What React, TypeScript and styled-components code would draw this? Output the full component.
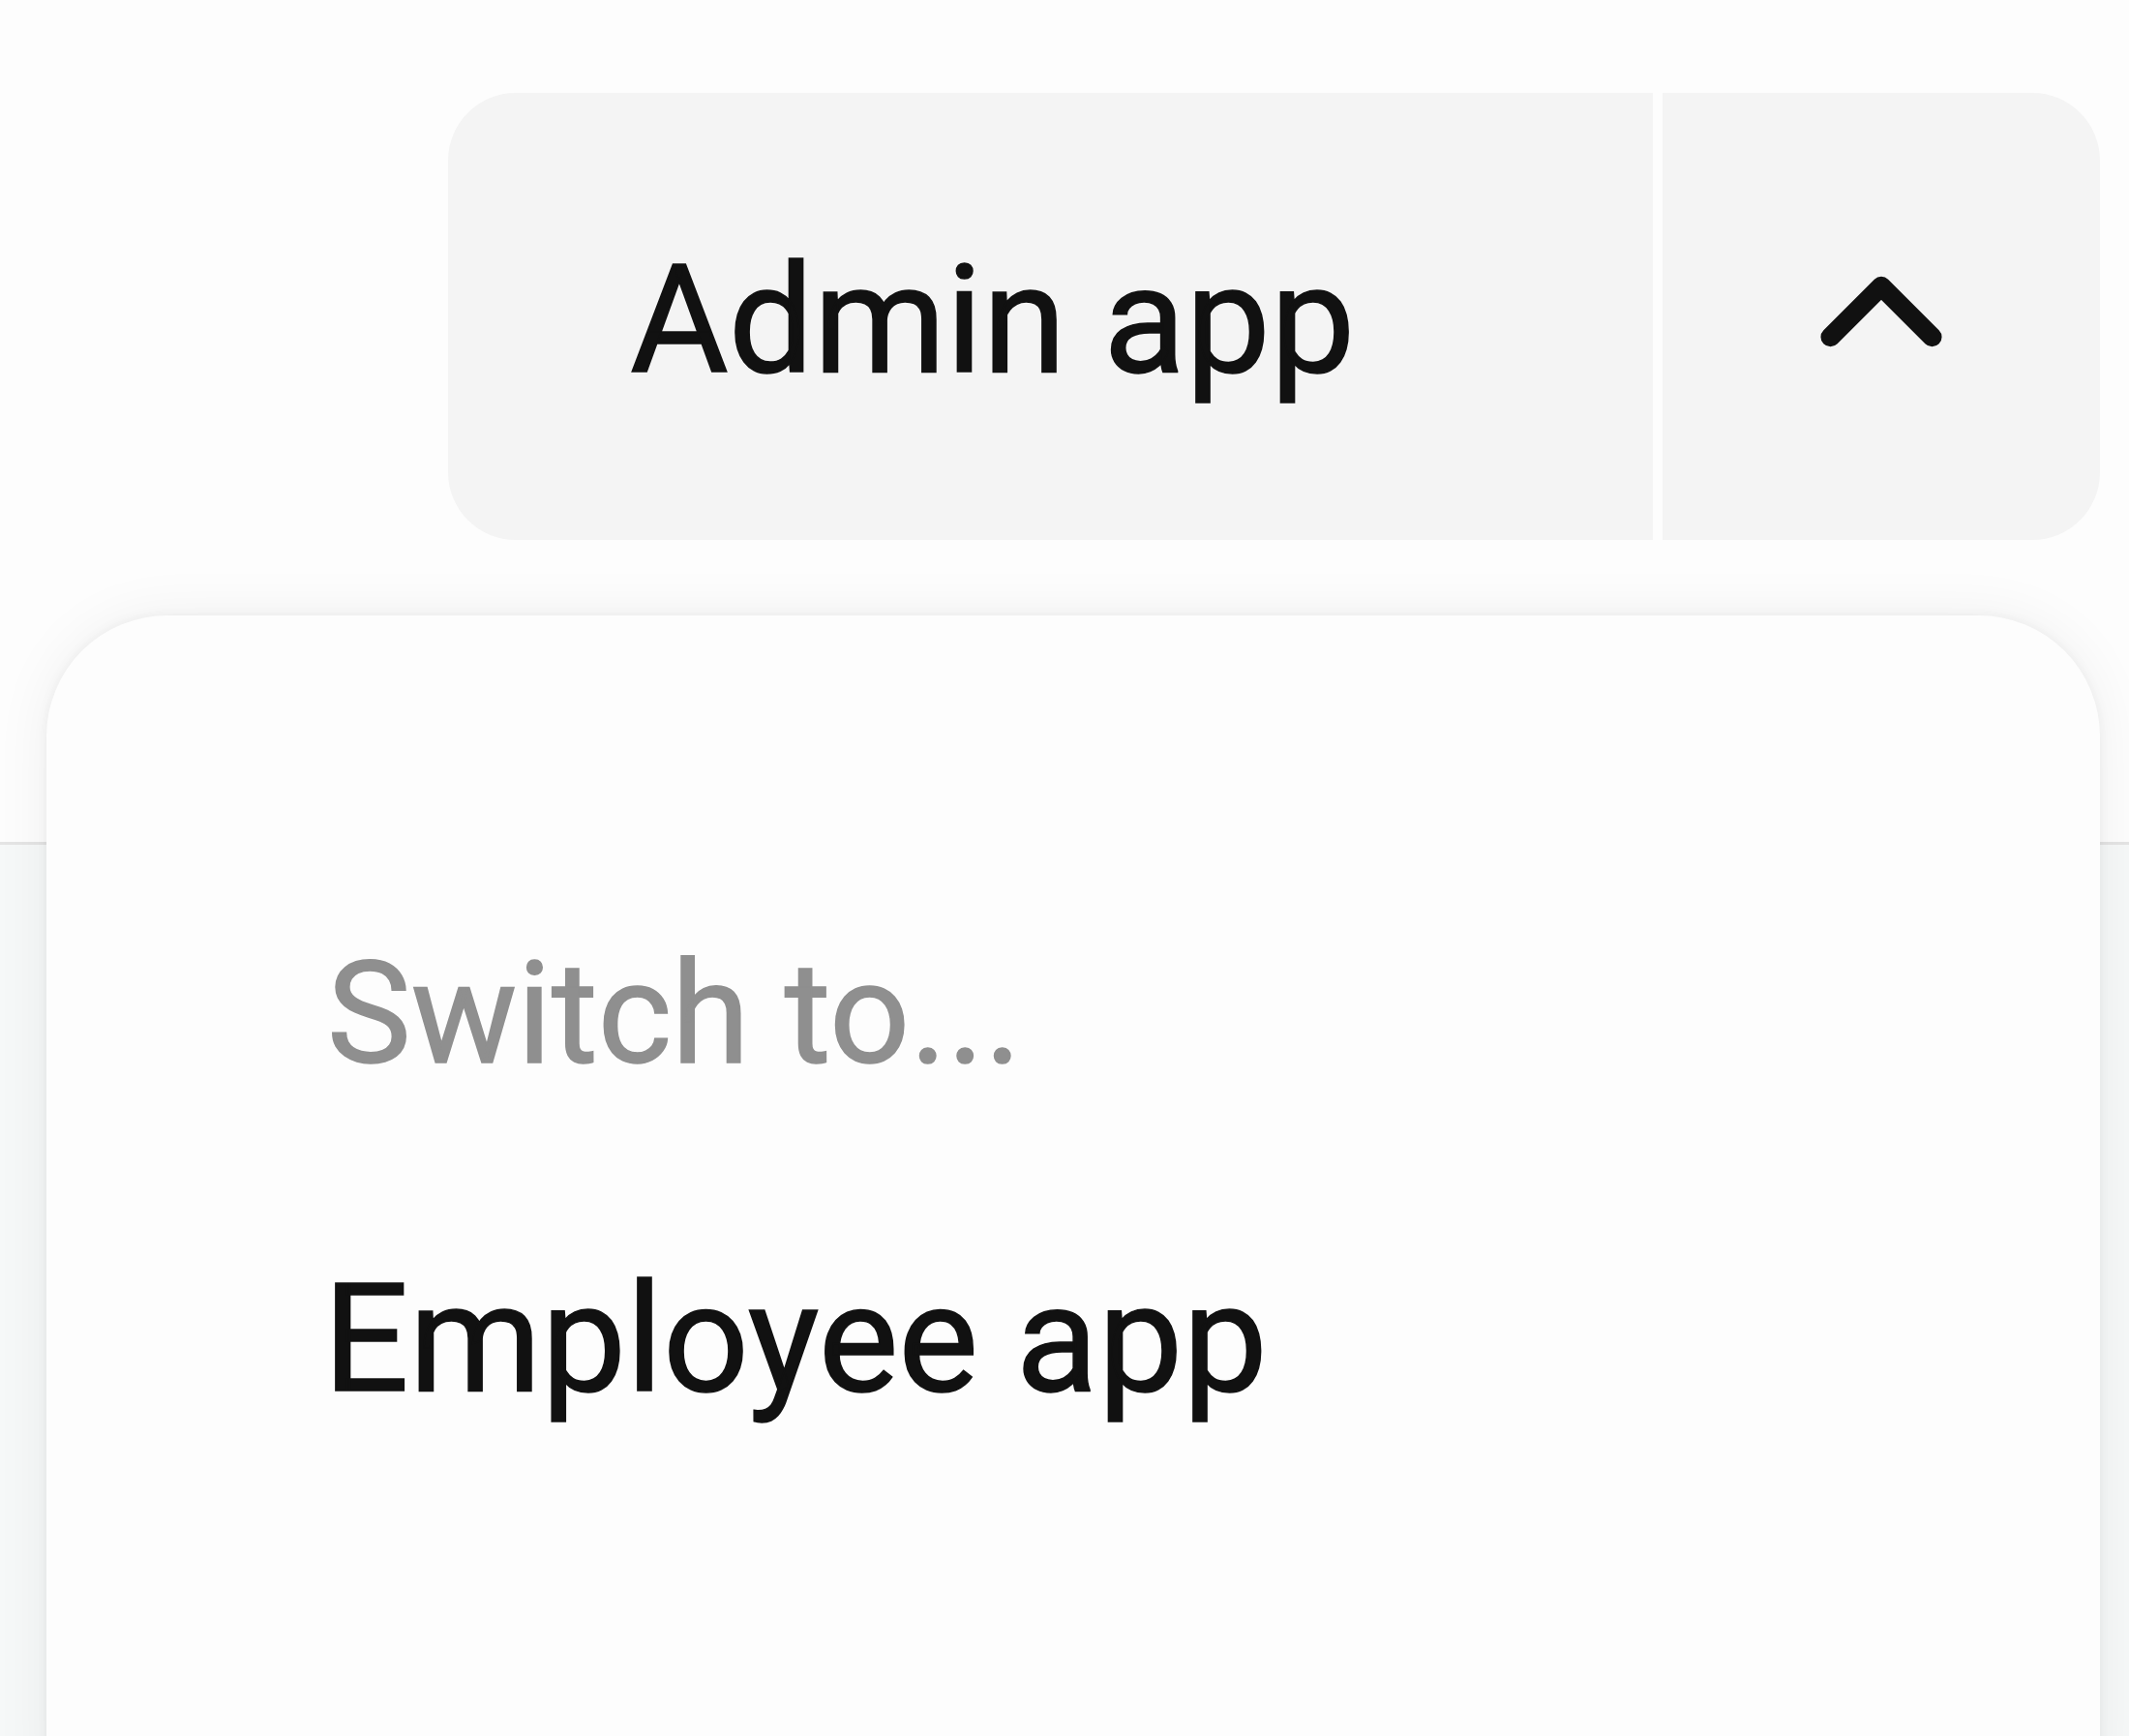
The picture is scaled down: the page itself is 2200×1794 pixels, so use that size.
import React from 'react'
import styled, {createGlobalStyle} from 'styled-components'
import {ChevronUp} from 'lucide-react'

const GlobalStyle = createGlobalStyle`
  html, body {
    margin: 0;
    padding: 0;
    height: 1794px;
    overflow: hidden;
    background: #f6f8f8;
    font-family: Roboto, "Liberation Sans", sans-serif;
  }
`

export default function App() {
  return (
    <Page>
      <GlobalStyle />
      <Header>
        <Switcher>
          <SplitButton>
            <Current>Admin app</Current>
            <Divider />
            <Toggle aria-label="Close app switcher">
              <ChevronUp size={210} strokeWidth={2.3} color="#111" />
            </Toggle>
          </SplitButton>
          <Menu>
            <MenuLabel>Switch to...</MenuLabel>
            <MenuItem>Employee app</MenuItem>
          </Menu>
        </Switcher>
      </Header>
      <Body />
    </Page>
  )
}

const Page = styled.div`
  display: flex;
  flex-direction: column;
  height: 1794px;
`

const Header = styled.header`
  display: flex;
  justify-content: flex-end;
  align-items: flex-start;
  box-sizing: border-box;
  height: 873px;
  padding: 96px 30px 0 0;
  background: #fdfdfd;
  border-bottom: 3px solid #e4e4e4;
`

const Body = styled.main`
  flex: 1;
  background: #f6f8f8;
`

const Switcher = styled.div`
  position: relative;
  width: 1707px;
`

const SplitButton = styled.div`
  display: flex;
  align-items: stretch;
  height: 462px;
  background: #f4f4f4;
  border-radius: 70px;
  overflow: hidden;
`

const Current = styled.div`
  display: flex;
  align-items: center;
  width: 1245px;
  box-sizing: border-box;
  padding: 8px 0 0 188px;
  font-size: 156px;
  line-height: 1.2;
  color: #111;
  -webkit-text-stroke: 1.5px #111;
`

const Divider = styled.span`
  width: 10px;
  background: #fdfdfd;
`

const Toggle = styled.button`
  flex: 1;
  display: flex;
  align-items: center;
  justify-content: center;
  padding: 0 0 10px;
  border: 0;
  background: transparent;
`

const Menu = styled.div`
  position: absolute;
  top: calc(100% + 78px);
  left: -415px;
  right: 0;
  height: 1300px;
  box-sizing: border-box;
  padding: 325px 0 0 290px;
  background: #fdfdfd;
  border-radius: 125px;
  box-shadow: 0 0 12px rgba(0, 0, 0, 0.05), 0 0 60px rgba(0, 0, 0, 0.06);
`

const MenuLabel = styled.div`
  font-size: 146px;
  line-height: 1.2;
  color: #8f8f8f;
  -webkit-text-stroke: 1.5px #8f8f8f;
`

const MenuItem = styled.div`
  margin: 154px 0 0 -4px;
  font-size: 156px;
  line-height: 1.2;
  color: #111;
  -webkit-text-stroke: 1.5px #111;
`
